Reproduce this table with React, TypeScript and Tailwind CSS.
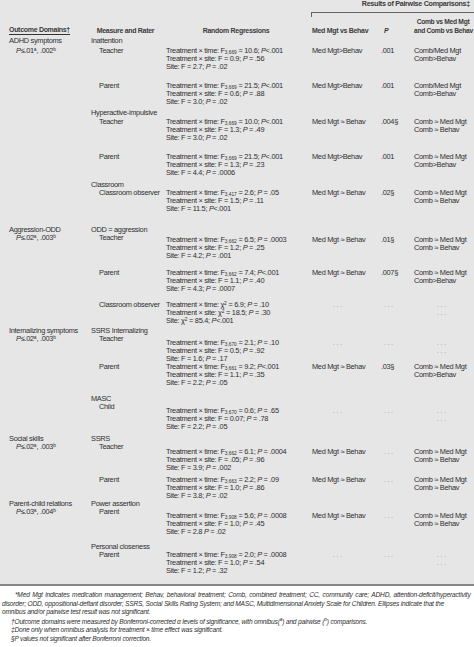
import type { ReactNode } from 'react'

// tiny helpers for the statistics text
function Sub({ children }: { children: ReactNode }) {
  return <sub className="text-[4.8px] tracking-normal">{children}</sub>
}

function Sup({ children }: { children: ReactNode }) {
  return <sup className="text-[4.8px] tracking-normal">{children}</sup>
}

function Dots({ className = '' }: { className?: string }) {
  return <span className={`tracking-[1.5px] text-[#9b9b9b] ${className}`}>...</span>
}

const tt = (df: string, v: string, p: string) => (
  <>
    Treatment × time: F<Sub>{df}</Sub> = {v}; <i>P</i>
    {p}
  </>
)
const ts = (v: string, p: string) => (
  <>
    Treatment × site: F = {v}; <i>P</i>
    {p}
  </>
)
const site = (v: string, p: string) => (
  <>
    Site: F = {v}; <i>P</i>
    {p}
  </>
)
const pLe = (a: string, b: string) => (
  <>
    <i>P</i>≤{a}
    <Sup>a</Sup>, {b}
    <Sup>b</Sup>
  </>
)

interface Line {
  a?: ReactNode
  b?: ReactNode
  c?: ReactNode
  d?: ReactNode
  e?: ReactNode
  f?: ReactNode
  ia?: boolean
  ib?: boolean
  gap?: string
  shift?: string
}

interface BlockOpts {
  a?: ReactNode
  b: string
  gap?: string
  shift?: string
  t: ReactNode
  s: ReactNode
  st: ReactNode
  d?: ReactNode
  e?: ReactNode
  f1?: ReactNode
  f2?: ReactNode
  empty?: boolean
}

function block(o: BlockOpts): Line[] {
  const d = o.empty ? <Dots className="pl-[21px]" /> : o.d
  const e = o.empty ? <Dots className="pl-[3px]" /> : o.e
  const f1 = o.empty ? <Dots className="pl-[23px]" /> : o.f1
  const f2 = o.empty ? <Dots className="pl-[23px]" /> : o.f2
  return [
    { a: o.a, ia: true, b: o.b, ib: true, c: o.t, d, e, f: f1, gap: o.gap, shift: o.shift },
    { c: o.s, f: f2 },
    { c: o.st },
  ]
}

const mg = 'Med Mgt ≈ Behav'
const cm = 'Comb ≈ Med Mgt'
const cb = 'Comb ≈ Behav'

const lines: Line[] = [
  { a: 'ADHD symptoms', b: 'Inattention', gap: 'mt-[2px]' },
  ...block({
    a: pLe('.01', '.002'), b: 'Teacher', gap: 'mt-[2px]',
    t: tt('3,669', '10.6', '<.001'), s: ts('0.9', ' = .56'), st: site('2.7', ' = .02'),
    d: 'Med Mgt>Behav', e: '.001', f1: 'Comb/Med Mgt', f2: 'Comb>Behav',
  }),
  ...block({
    b: 'Parent', gap: 'mt-[11px]',
    t: tt('3,669', '21.5', '<.001'), s: ts('0.6', ' = .88'), st: site('3.0', ' = .02'),
    d: 'Med Mgt>Behav', e: '.001', f1: 'Comb/Med Mgt', f2: 'Comb>Behav',
  }),
  { b: 'Hyperactive-impulsive', gap: 'mt-[3px]' },
  ...block({
    b: 'Teacher', gap: 'mt-[1px]',
    t: tt('3,669', '10.0', '<.001'), s: ts('1.3', ' = .49'), st: site('3.0', ' = .02'),
    d: mg, e: '.004§', f1: cm, f2: cb,
  }),
  ...block({
    b: 'Parent', gap: 'mt-[11px]',
    t: tt('3,669', '21.5', '<.001'), s: ts('1.3', ' = .23'), st: site('4.4', ' = .0006'),
    d: 'Med Mgt>Behav', e: '.001', f1: cm, f2: 'Comb>Behav',
  }),
  { b: 'Classroom', gap: 'mt-[4px]' },
  ...block({
    b: 'Classroom observer',
    t: tt('3,417', '2.6', ' = .05'), s: ts('1.5', ' = .11'), st: site('11.5', '<.001'),
    d: mg, e: '.02§', f1: cm, f2: cb,
  }),
  { a: 'Aggression-ODD', b: 'ODD = aggression', gap: 'mt-[13px]' },
  ...block({
    a: pLe('.02', '.003'), b: 'Teacher', shift: 'pt-[2px]',
    t: tt('3,662', '6.5', ' = .0003'), s: ts('1.2', ' = .25'), st: site('4.2', ' = .001'),
    d: mg, e: '.01§', f1: cm, f2: cb,
  }),
  ...block({
    b: 'Parent', gap: 'mt-[9px]',
    t: tt('3,662', '7.4', '<.001'), s: ts('1.1', ' = .40'), st: site('4.3', ' = .0007'),
    d: mg, e: '.007§', f1: cm, f2: 'Comb>Behav',
  }),
  ...block({
    b: 'Classroom observer', gap: 'mt-[8px]', empty: true,
    t: (
      <>
        Treatment × time: χ<Sup>2</Sup> = 6.9; <i>P</i> = .10
      </>
    ),
    s: (
      <>
        Treatment × site: χ<Sup>2</Sup> = 18.5; <i>P</i> = .30
      </>
    ),
    st: (
      <>
        Site: χ<Sup>2</Sup> = 85.4; <i>P</i>&lt;.001
      </>
    ),
  }),
  { a: 'Internalizing symptoms', b: 'SSRS Internalizing', gap: 'mt-[2px]' },
  ...block({
    a: pLe('.02', '.003'), b: 'Teacher', shift: 'pt-[4px]', empty: true,
    t: tt('3,670', '2.1', ' = .10'), s: ts('0.5', ' = .92'), st: site('1.6', ' = .17'),
  }),
  ...block({
    b: 'Parent',
    t: tt('3,661', '9.2', '<.001'), s: ts('1.1', ' = .35'), st: site('2.2', ' = .05'),
    d: mg, e: '.03§', f1: cm, f2: 'Comb>Behav',
  }),
  { b: 'MASC', gap: 'mt-[8px]' },
  ...block({
    b: 'Child', shift: 'pt-[4px]', empty: true,
    t: tt('3,670', '0.6', ' = .65'), s: ts('0.07', ' = .78'), st: site('2.2', ' = .05'),
  }),
  { a: 'Social skills', b: 'SSRS', gap: 'mt-[4px]' },
  ...block({
    a: pLe('.02', '.003'), b: 'Teacher', shift: 'pt-[5px]',
    t: tt('3,662', '6.1', ' = .0004'), s: ts('.05', ' = .96'), st: site('3.9', ' = .002'),
    d: mg, e: <Dots className="pl-[3px]" />, f1: cm, f2: cb,
  }),
  ...block({
    b: 'Parent', gap: 'mt-[4px]',
    t: tt('3,663', '2.2', ' = .09'), s: ts('1.0', ' = .86'), st: site('3.8', ' = .02'),
    d: mg, e: <Dots className="pl-[3px]" />, f1: cm, f2: cb,
  }),
  { a: 'Parent-child relations', b: 'Power assertion' },
  ...block({
    a: pLe('.03', '.004'), b: 'Parent', shift: 'pt-[4px]',
    t: tt('3,908', '5.6', ' = .0008'), s: ts('1.0', ' = .45'), st: <>Site: F = 2.8 <i>P</i> = .02</>,
    d: mg, e: <Dots className="pl-[3px]" />, f1: cm, f2: cb,
  }),
  { b: 'Personal closeness', gap: 'mt-[7px]' },
  ...block({
    b: 'Parent', empty: true,
    t: tt('3,908', '2.0', ' = .0008'), s: ts('1.0', ' = .54'), st: site('1.2', ' = .32'),
  }),
]

function Row({ l }: { l: Line }) {
  return (
    <div className={`grid grid-cols-[82px_75px_146px_69px_33px_60px] pl-[9px] ${l.gap ?? ''}`}>
      <div className={`whitespace-nowrap ${l.ia ? 'pl-[7px]' : ''}`}>{l.a}</div>
      <div className={`whitespace-nowrap ${l.ib ? 'pl-[8px]' : ''}`}>{l.b}</div>
      <div className={`whitespace-nowrap ${l.shift ?? ''}`}>{l.c}</div>
      <div className={`whitespace-nowrap ${l.shift ?? ''}`}>{l.d}</div>
      <div className={`whitespace-nowrap ${l.shift ?? ''}`}>{l.e}</div>
      <div className={`whitespace-nowrap ${l.shift ?? ''}`}>{l.f}</div>
    </div>
  )
}

const notes: { text: ReactNode; cls: string }[] = [
  {
    cls: 'pl-[15px] [word-spacing:1px]',
    text: '*Med Mgt indicates medication management; Behav, behavioral treatment; Comb, combined treatment; CC, community care; ADHD, attention-deficit/hyperactivity',
  },
  {
    cls: 'pl-[2px]',
    text: 'disorder; ODD, oppositional-defiant disorder; SSRS, Social Skills Rating System; and MASC, Multidimensional Anxiety Scale for Children. Ellipses indicate that the',
  },
  { cls: 'pl-[2px]', text: 'omnibus and/or pairwise test result was not significant.' },
  {
    cls: 'pl-[11px] mt-[1px]',
    text: (
      <>
        †Outcome domains were measured by Bonferroni-corrected α levels of significance, with omnibus(<Sup>a</Sup>) and
        pairwise (<Sup>b</Sup>) comparisons.
      </>
    ),
  },
  { cls: 'pl-[11px]', text: '‡Done only when omnibus analysis for treatment × time effect was significant.' },
  { cls: 'pl-[11px]', text: '§P values not significant after Bonferroni correction.' },
]

export default function App() {
  return (
    <div className="w-[474px] h-[647px] overflow-hidden bg-white font-['Liberation_Sans',Arial,sans-serif] text-[#2e2e2e] text-[7.4px] tracking-[-0.3px] leading-[8px]">
      <div className="bg-[#e6e6e6] pb-[9px] border-b-2 border-[#868686]">
        {/* spanning head */}
        <div className="flex justify-end pr-[4px] h-[8px] font-bold text-[7.2px] text-[#3a3a3a] whitespace-nowrap">
          Results of Pairwise Comparisons‡
        </div>
        <div className="ml-[311px] mt-[4px] h-[5px] border-t border-l border-[#666]" />

        {/* column heads */}
        <div className="grid grid-cols-[82px_75px_146px_69px_33px_60px] items-end pl-[9px] font-bold text-[7px] leading-[8.5px] h-[18px] text-[#3a3a3a] whitespace-nowrap">
          <div>
            <span className="inline-block border-b border-[#333] leading-[8px]">Outcome Domains†</span>
          </div>
          <div className="text-center pr-[6px]">Measure and Rater</div>
          <div className="text-center pr-[6px]">Random Regressions</div>
          <div>Med Mgt vs Behav</div>
          <div className="pl-[3px]">
            <i>P</i>
          </div>
          <div className="text-center text-[6.7px] pr-[2px]">
            Comb vs Med Mgt
            <br />
            and Comb vs Behav
          </div>
        </div>

        {lines.map((l, i) => (
          <Row key={i} l={l} />
        ))}
      </div>

      <div className="pt-[5px] italic text-[6.6px] tracking-[-0.2px] leading-[8.5px] text-[#2e2e2e]">
        {notes.map((n, i) => (
          <div key={i} className={`whitespace-nowrap overflow-hidden ${n.cls}`}>
            {n.text}
          </div>
        ))}
      </div>
    </div>
  )
}
